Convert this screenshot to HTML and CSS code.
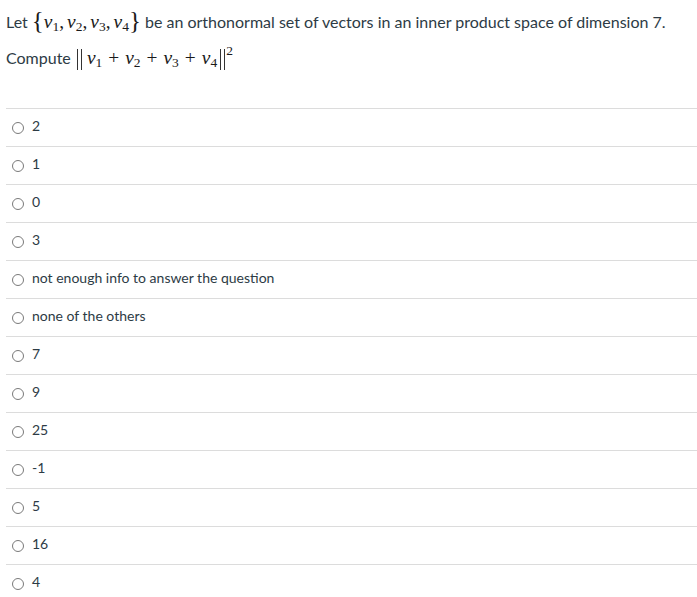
FILE: index.html
```html
<!DOCTYPE html>
<html>
<head>
<meta charset="utf-8">
<link rel="stylesheet" href="styles.css">
</head>
<body>
<div class="quiz">
  <div class="prompt">
    <p>Let <span class="math"><span class="brace">{</span><i class="mv">v</i><sub>1</sub><span class="comma">,</span><i class="mv">v</i><sub>2</sub><span class="comma">,</span><i class="mv">v</i><sub>3</sub><span class="comma">,</span><i class="mv">v</i><sub>4</sub><span class="brace">}</span></span> be an orthonormal set of vectors in an inner product space of dimension 7.</p>
    <p>Compute <span class="math"><span class="bars"><span class="bar"></span><span class="bar"></span></span><i class="mv">v</i><sub>1</sub><span class="op">+</span><i class="mv">v</i><sub>2</sub><span class="op">+</span><i class="mv">v</i><sub>3</sub><span class="op">+</span><i class="mv">v</i><sub>4</sub><span class="bars end"><span class="bar"></span><span class="bar"></span></span><sup>2</sup></span></p>
  </div>
  <div class="answers">
    <label class="answer"><span class="radio"></span><span class="label">2</span></label>
    <label class="answer"><span class="radio"></span><span class="label">1</span></label>
    <label class="answer"><span class="radio"></span><span class="label">0</span></label>
    <label class="answer"><span class="radio"></span><span class="label">3</span></label>
    <label class="answer"><span class="radio"></span><span class="label">not enough info to answer the question</span></label>
    <label class="answer"><span class="radio"></span><span class="label">none of the others</span></label>
    <label class="answer"><span class="radio"></span><span class="label">7</span></label>
    <label class="answer"><span class="radio"></span><span class="label">9</span></label>
    <label class="answer"><span class="radio"></span><span class="label">25</span></label>
    <label class="answer"><span class="radio"></span><span class="label">-1</span></label>
    <label class="answer"><span class="radio"></span><span class="label">5</span></label>
    <label class="answer"><span class="radio"></span><span class="label">16</span></label>
    <label class="answer"><span class="radio"></span><span class="label">4</span></label>
  </div>
</div>
</body>
</html>
```

FILE: styles.css
```css
html, body {
  margin: 0;
  padding: 0;
  background: #ffffff;
}

body {
  font-family: Lato, "Noto Sans", sans-serif;
  color: #2d3b45;
  overflow: hidden;
}

.quiz {
  padding-left: 6px;
}

.prompt {
  padding-top: 4px;
  margin-bottom: 32px;
}

.prompt p {
  margin: 0;
  font-size: 16px;
  line-height: 36px;
  height: 36px;
  white-space: nowrap;
}

.math {
  font-family: "Liberation Serif", "Times New Roman", serif;
  font-size: 19.4px;
  line-height: 0;
  color: #1a1a1a;
}

.mv {
  font-style: italic;
}

.math sub {
  font-size: 13.5px;
  line-height: 0;
  vertical-align: -3px;
  font-style: normal;
}

.math sup {
  font-size: 13.5px;
  line-height: 0;
  vertical-align: 9px;
  padding-left: 1px;
}

.brace {
  font-size: 25px;
  line-height: 0;
  vertical-align: -1px;
}

.comma {
  padding-right: 3px;
}

.op {
  padding: 0 6px;
}

.bars {
  display: inline-flex;
  gap: 3px;
  vertical-align: -6px;
  margin-left: 2px;
  margin-right: 5px;
}

.bars.end {
  margin-left: 3px;
  margin-right: 0;
}

.bar {
  display: block;
  width: 0;
  height: 21px;
  border-left: 1px solid #333;
}

.answers {
  display: flex;
  flex-direction: column;
}

.answer {
  display: flex;
  align-items: center;
  height: 37px;
  border-top: 1px solid #dcdcdc;
  font-size: 14px;
}

.label {
  padding-bottom: 5px;
}

.radio {
  width: 10px;
  height: 10px;
  border: 1px solid #7a7a7a;
  border-radius: 50%;
  margin-left: 6px;
  margin-right: 8px;
  flex: none;
}
```
